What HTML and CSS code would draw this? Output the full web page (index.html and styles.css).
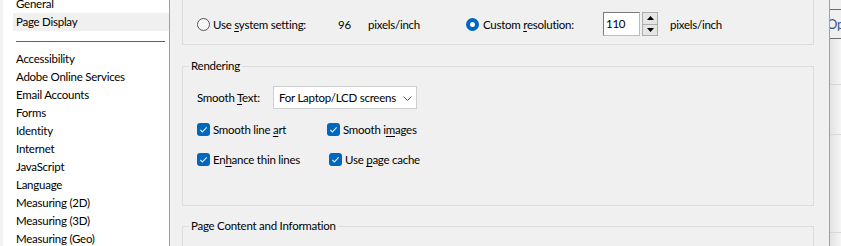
FILE: index.html
```html
<!DOCTYPE html>
<html>
<head>
<meta charset="utf-8">
<link rel="stylesheet" href="styles.css">
</head>
<body>
<div class="window">
  <aside class="sidebar">
    <ul class="nav nav-top">
      <li class="nav-item">General</li>
      <li class="nav-item is-selected">Page Display</li>
    </ul>
    <div class="nav-sep"></div>
    <ul class="nav">
      <li class="nav-item">Accessibility</li>
      <li class="nav-item">Adobe Online Services</li>
      <li class="nav-item">Email Accounts</li>
      <li class="nav-item">Forms</li>
      <li class="nav-item">Identity</li>
      <li class="nav-item">Internet</li>
      <li class="nav-item">JavaScript</li>
      <li class="nav-item">Language</li>
      <li class="nav-item">Measuring (2D)</li>
      <li class="nav-item">Measuring (3D)</li>
      <li class="nav-item">Measuring (Geo)</li>
    </ul>
  </aside>

  <main class="panel">
    <section class="group group-resolution">
      <div class="res-row">
        <span class="radio"></span>
        <span class="res-label res-label-sys">Use <u>s</u>ystem setting:</span>
        <span class="res-value">96</span>
        <span class="res-unit">pixels/inch</span>
        <span class="radio is-checked"></span>
        <span class="res-label res-label-custom">Custom <u>r</u>esolution:</span>
        <span class="num-input">110</span>
        <span class="spinner">
          <span class="spin-btn"><svg width="7" height="4" viewBox="0 0 7 4"><polygon points="0,4 7,4 3.5,0" fill="#000"/></svg></span>
          <span class="spin-btn"><svg width="7" height="4" viewBox="0 0 7 4"><polygon points="0,0 7,0 3.5,4" fill="#000"/></svg></span>
        </span>
        <span class="res-unit-2">pixels/inch</span>
      </div>
    </section>

    <section class="group group-rendering">
      <span class="group-title">Rendering</span>
      <div class="field-row">
        <span class="field-label">Smooth <u>T</u>ext:</span>
        <div class="select">
          <span>For Laptop/LCD screens</span>
          <svg class="chevron" width="9" height="5" viewBox="0 0 9 5"><polyline points="0.5,0.5 4.5,4.5 8.5,0.5" fill="none" stroke="#555" stroke-width="1"/></svg>
        </div>
      </div>
      <div class="check-row check-row-1">
        <span class="check-item col1">
          <span class="checkbox"><svg width="13" height="13" viewBox="0 0 13 13"><polyline points="3.3,6.8 5.4,8.9 9.7,4.4" fill="none" stroke="#e6f0fb" stroke-width="1.1"/></svg></span>
          <span>Smooth line <u>a</u>rt</span>
        </span>
        <span class="check-item">
          <span class="checkbox"><svg width="13" height="13" viewBox="0 0 13 13"><polyline points="3.3,6.8 5.4,8.9 9.7,4.4" fill="none" stroke="#e6f0fb" stroke-width="1.1"/></svg></span>
          <span>Smooth i<u>m</u>ages</span>
        </span>
      </div>
      <div class="check-row check-row-2">
        <span class="check-item col1 col1-wide">
          <span class="checkbox"><svg width="13" height="13" viewBox="0 0 13 13"><polyline points="3.3,6.8 5.4,8.9 9.7,4.4" fill="none" stroke="#e6f0fb" stroke-width="1.1"/></svg></span>
          <span>En<u>h</u>ance thin lines</span>
        </span>
        <span class="check-item">
          <span class="checkbox"><svg width="13" height="13" viewBox="0 0 13 13"><polyline points="3.3,6.8 5.4,8.9 9.7,4.4" fill="none" stroke="#e6f0fb" stroke-width="1.1"/></svg></span>
          <span>Use <u>p</u>age cache</span>
        </span>
      </div>
    </section>

    <section class="group group-content">
      <span class="group-title">Page Content and Information</span>
    </section>
  </main>

  <div class="side-strip">
    <div class="strip-top"></div>
    <div class="strip-btn">Options</div>
    <div class="strip-list">
      <div class="strip-line line-1"></div>
      <div class="strip-line line-2"></div>
      <div class="strip-line line-3"></div>
    </div>
  </div>
</div>
</body>
</html>
```

FILE: styles.css
```css
html, body {
  margin: 0;
  padding: 0;
  background: #f0f0f0;
}

.window {
  display: flex;
  width: 841px;
  height: 246px;
  overflow: hidden;
  font-family: Lato, "Open Sans", sans-serif;
  font-size: 11.5px;
  letter-spacing: -0.25px;
  color: #000;
}

u {
  text-decoration: underline;
  text-underline-offset: 2px;
}

/* Sidebar */
.sidebar {
  flex: none;
  width: 170px;
  box-sizing: border-box;
  background: #fff;
  border-left: 3px solid #f3f3f3;
  border-right: 1px solid #a0a0a0;
  overflow: hidden;
}

.nav {
  list-style: none;
  margin: 0;
  padding: 0;
}

.nav-top {
  margin-top: -5px;
}

.nav-item {
  height: 18px;
  line-height: 18px;
  padding-left: 13px;
  white-space: nowrap;
}

.nav-item.is-selected {
  background: #f0f0f0;
  margin-left: 10px;
  padding-left: 3px;
}

.nav-sep {
  height: 1px;
  background: #1f6fbf;
  margin: 10px 4px 8px 13px;
}

/* Main panel */
.panel {
  flex: none;
  width: 660px;
  box-sizing: border-box;
  padding: 0 15px 0 12px;
  border-right: 1px solid #a0a0a0;
}

.group {
  position: relative;
  box-sizing: border-box;
  border: 1px solid #dcdcdc;
}

.group-title {
  position: absolute;
  top: -8px;
  left: 6px;
  padding: 0 2px;
  line-height: 14px;
  background: #f0f0f0;
  white-space: nowrap;
}

.group-resolution {
  margin-top: -10px;
  height: 55px;
  padding: 21px 0 0 14px;
}

.group-rendering {
  margin-top: 21px;
  height: 140px;
  padding: 19px 0 0 14px;
}

.group-content {
  margin-top: 20px;
  height: 60px;
}

/* Resolution row */
.res-row {
  display: flex;
  align-items: center;
  height: 24px;
  white-space: nowrap;
}

.radio {
  flex: none;
  width: 13px;
  height: 13px;
  box-sizing: border-box;
  border: 1px solid #555;
  border-radius: 50%;
  background: #f7f7f7;
  margin-right: 3px;
}

.radio.is-checked {
  border: 4px solid #0067c0;
  background: #fff;
  margin-right: 4px;
}

.res-label-sys { width: 125px; }
.res-value { width: 30px; }
.res-unit { width: 98px; }
.res-label-custom { width: 120px; }

.num-input {
  flex: none;
  width: 37px;
  height: 24px;
  box-sizing: border-box;
  border: 1px solid #7a7a7a;
  border-right-color: #bdbdbd;
  border-bottom-color: #bdbdbd;
  background: #fff;
  line-height: 21px;
  padding-left: 2px;
  margin-right: 2px;
}

.spinner {
  flex: none;
  display: flex;
  flex-direction: column;
  width: 16px;
  height: 24px;
  margin-right: 12px;
}

.spin-btn {
  flex: 1;
  display: flex;
  align-items: center;
  justify-content: center;
  box-sizing: border-box;
  border: 1px solid #adadad;
  background: #e5e5e5;
}

.spin-btn + .spin-btn {
  border-top: none;
}

/* Rendering group */
.field-row {
  display: flex;
  align-items: center;
  height: 23px;
}

.field-label {
  width: 76px;
  flex: none;
}

.select {
  flex: none;
  display: flex;
  align-items: center;
  justify-content: space-between;
  width: 144px;
  height: 23px;
  box-sizing: border-box;
  border: 1px solid #cfcfcf;
  background: #fff;
  padding: 0 4px 0 5px;
  white-space: nowrap;
}

.chevron {
  margin-top: 1px;
}

.check-row {
  display: flex;
  align-items: center;
  height: 13px;
  white-space: nowrap;
}

.check-row-1 { margin-top: 14px; }
.check-row-2 { margin-top: 17px; }

.check-item {
  display: flex;
  align-items: center;
}

.col1 { width: 130px; }
.col1-wide { width: 132px; }

.checkbox {
  flex: none;
  width: 13px;
  height: 13px;
  border-radius: 3px;
  background: #0067c0;
  margin-right: 3px;
  display: flex;
}

/* Right strip */
.side-strip {
  flex: 1;
  display: flex;
  flex-direction: column;
  overflow: hidden;
}

.strip-top {
  height: 9px;
  background: #f0f0f0;
}

.strip-btn {
  height: 30px;
  box-sizing: border-box;
  border-top: 1px solid #6e6e6e;
  border-bottom: 1px solid #6e6e6e;
  background: #f0f0f0;
  color: #3a5684;
  line-height: 28px;
  text-indent: -3px;
  font-size: 13px;
  white-space: nowrap;
}

.strip-list {
  flex: 1;
  background: linear-gradient(to right, #e2e2e2, #f6f6f6);
  display: flex;
  flex-direction: column;
}

.strip-line {
  height: 1px;
  background: #d6d6d6;
}

.line-1 { margin-top: 45px; }
.line-2 { margin-top: 49px; }
.line-3 { margin-top: 97px; }
```
